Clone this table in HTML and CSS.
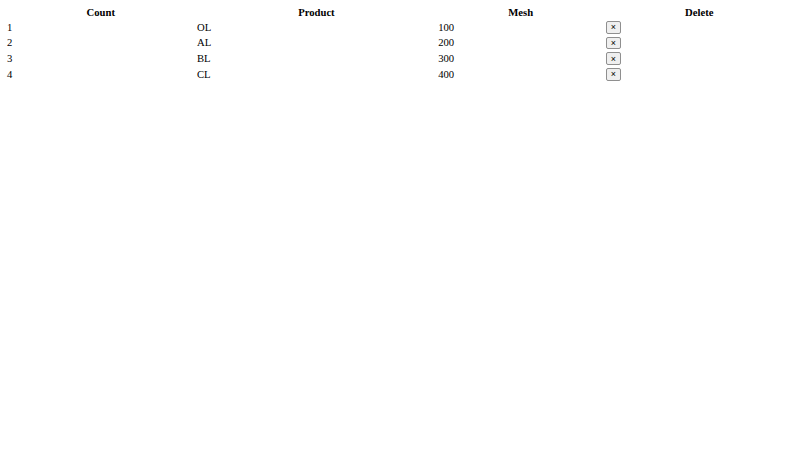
FILE: index.html
```html
<!DOCTYPE html>
<html>
<head>
<link rel="stylesheet" href="styles.css">
</head>
<body class="page">
<table class="grid">
  <thead>
    <tr><th>Count</th><th>Product</th><th>Mesh</th><th>Delete</th></tr>
  </thead>
  <tbody>
    <tr><td>1</td><td>OL</td><td>100</td><td><button class="del">×</button></td></tr>
    <tr><td>2</td><td>AL</td><td>200</td><td><button class="del">×</button></td></tr>
    <tr><td>3</td><td>BL</td><td>300</td><td><button class="del">×</button></td></tr>
    <tr><td>4</td><td>CL</td><td>400</td><td><button class="del">×</button></td></tr>
  </tbody>
</table>
</body>
</html>
```
FILE: styles.css
```css
.page {
  margin: 5.33px;
  font-family: "Liberation Serif", serif;
  font-size: 10.67px;
  color: #000;
  background: #fff;
}
.grid {
  width: 100%;
  border-spacing: 1.33px;
}
.grid th,
.grid td {
  padding: 0.67px;
  line-height: 13.3px;
  vertical-align: middle;
}
.grid th {
  padding-top: 0;
  line-height: 12.2px;
}
.del {
  display: block;
  box-sizing: border-box;
  width: 15.5px;
  height: 12.5px;
  padding: 0;
  font-family: "Liberation Sans", sans-serif;
  font-size: 8.9px;
  line-height: 10px;
  color: #000;
  border: 1px solid #8f8f8f;
  border-radius: 2px;
  background: #efefef;
}
```
